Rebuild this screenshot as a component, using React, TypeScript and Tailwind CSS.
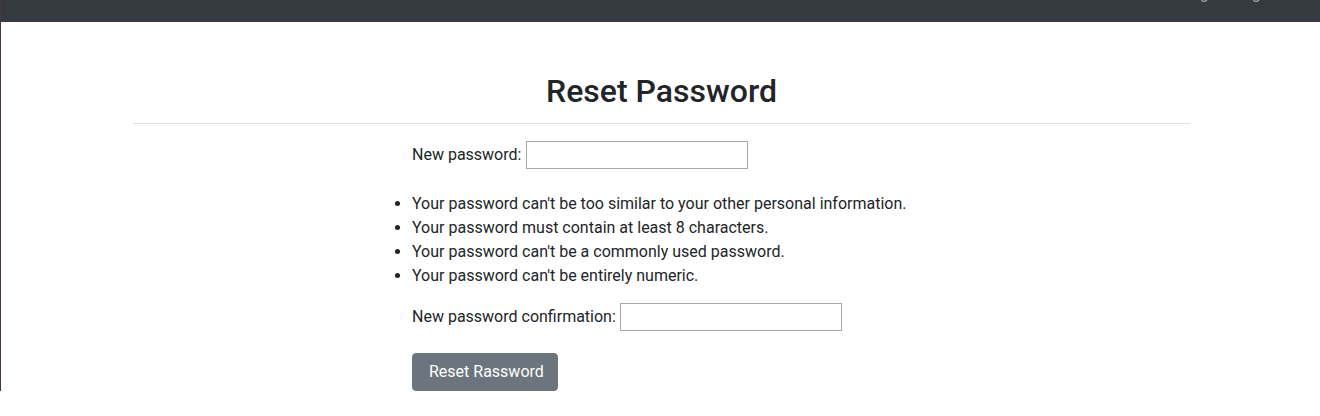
import React from 'react';

const rules = [
  "Your password can't be too similar to your other personal information.",
  'Your password must contain at least 8 characters.',
  "Your password can't be a commonly used password.",
  "Your password can't be entirely numeric.",
];

const App = () => {
  return (
    <div className="min-h-[416px] bg-white font-['Roboto',sans-serif] text-[16px] text-[#212529] border-l border-[#4a3636]">
      {/* Navbar (scrolled, mostly off the top) */}
      <nav className="-mt-[35px] h-[57px] bg-[#343a40] flex items-center justify-end pr-[28px]">
        <div className="flex items-center gap-[12px] text-[rgba(255,255,255,0.55)] leading-6">
          <a href="#">Login</a>
          <a href="#">Register</a>
        </div>
      </nav>

      <main className="w-[1057px] ml-[132px]">
        <h2 className="mt-[50px] text-center text-[32px] leading-[1.2] font-medium">Reset Password</h2>
        <hr className="mt-[13px] border-0 border-t border-[#e0e0e0]" />

        <form className="ml-[247px] pt-[17px]">
          <div className="pl-8 flex items-center gap-[5px]">
            <label htmlFor="pw1">New password:</label>
            <input id="pw1" type="password" className="h-[28px] w-[222px] border border-[#a9a9a9] bg-white" />
          </div>

          <ul className="mt-[23px] list-disc pl-8 leading-6">
            {rules.map((r) => (
              <li key={r}>{r}</li>
            ))}
          </ul>

          <div className="mt-[15px] pl-8 flex items-center gap-1">
            <label htmlFor="pw2">New password confirmation:</label>
            <input id="pw2" type="password" className="h-[28px] w-[222px] border border-[#a9a9a9] bg-white" />
          </div>

          <div className="mt-[22px] pl-8">
            <button
              type="button"
              className="pl-[16px] pr-[13px] py-1.5 leading-6 rounded-[4px] border border-[#6c757d] bg-[#6c757d] text-white"
            >
              Reset Rassword
            </button>
          </div>
        </form>
      </main>
    </div>
  );
};

export default App;
